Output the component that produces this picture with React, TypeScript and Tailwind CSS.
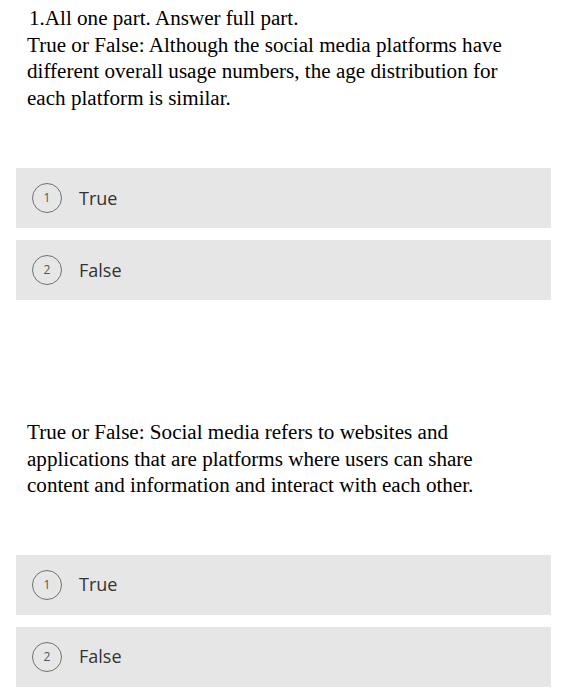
const Choice = ({ n, label }: { n: number; label: string }) => {
  return (
    <div className="flex h-[60px] items-center bg-[#e6e6e6] pl-[16px]">
      <span className="flex h-[30px] w-[30px] items-center justify-center rounded-full border-[1.5px] border-[#707070] text-[12px] text-[#555]">
        {n}
      </span>
      <span className="ml-[17px] text-[18px] text-[#333]">{label}</span>
    </div>
  );
};

const Question = ({ children }: { children: React.ReactNode }) => {
  return (
    <div className="pl-[27px] pr-[20px] font-['Liberation_Serif',serif] text-[21.1px] leading-[26.5px] text-black">
      {children}
    </div>
  );
};

export default function App() {
  return (
    <div className="min-h-[700px] bg-white pt-[5px] font-['Open_Sans',sans-serif]">
      <Question>
        <p className="pl-[2px]">1.All one part. Answer full part.</p>
        <p>
          True or False: Although the social media platforms have
          <br />
          different overall usage numbers, the age distribution for
          <br />
          each platform is similar.
        </p>
      </Question>

      <div className="mt-[57px] flex w-[535px] flex-col gap-[12px] pl-[16px] box-content">
        <Choice n={1} label="True" />
        <Choice n={2} label="False" />
      </div>

      <div className="mt-[119px]">
        <Question>
          <p>
            True or False: Social media refers to websites and
            <br />
            applications that are platforms where users can share
            <br />
            content and information and interact with each other.
          </p>
        </Question>
      </div>

      <div className="mt-[56px] flex w-[535px] flex-col gap-[12px] pl-[16px] box-content">
        <Choice n={1} label="True" />
        <Choice n={2} label="False" />
      </div>
    </div>
  );
}
